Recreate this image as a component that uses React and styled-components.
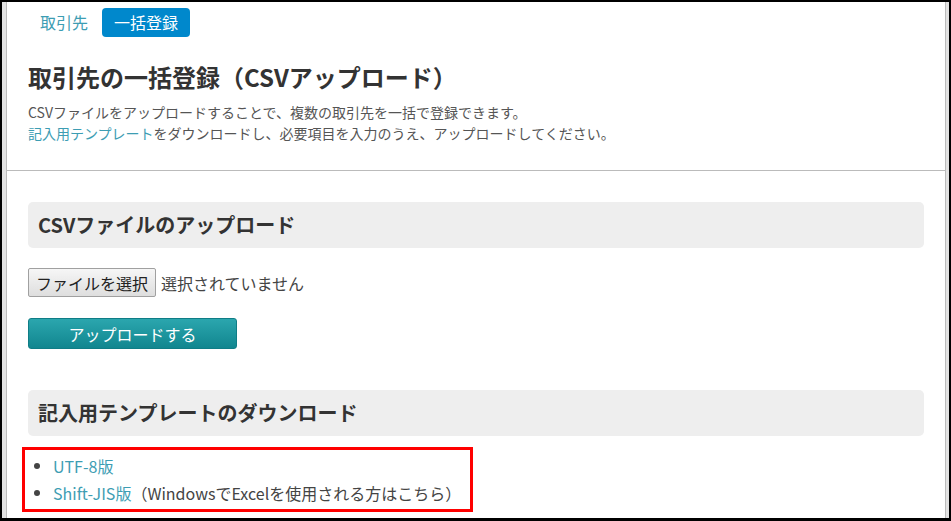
import React from "react";
import styled, { createGlobalStyle } from "styled-components";

const Global = createGlobalStyle`
  html, body { margin: 0; padding: 0; background: #fff; }
  * { box-sizing: border-box; }
  body { font-family: "Noto Sans CJK JP", "Noto Sans", sans-serif; color: #333; }
`;

const Frame = styled.div`
  width: 951px;
  height: 521px;
  border: 2px solid #000;
  border-bottom-width: 3px;
  background: #e2e2e2;
  padding: 0 3px 0 4px;
  display: flex;
  overflow: hidden;
`;

const Panel = styled.div`
  flex: 1;
  background: #fff;
  border-left: 1px solid #bbb;
  border-right: 1px solid #bbb;
  display: flex;
  flex-direction: column;
`;

const Header = styled.div`
  padding: 6px 21px 26px;
  border-bottom: 1px solid #bbb;
`;

const Tabs = styled.div`
  display: flex;
  gap: 2px;
`;

const Tab = styled.div`
  height: 29px;
  line-height: 29px;
  padding: 0 12px;
  font-size: 16px;
  border-radius: 4px;
  color: ${(p) => (p.$active ? "#fff" : "#3d9db3")};
  background: ${(p) => (p.$active ? "#0088cc" : "transparent")};
`;

const Title = styled.h1`
  margin: 23px 0 0;
  font-size: 24px;
  line-height: 34px;
  font-weight: 700;
  color: #333;
`;

const Desc = styled.p`
  margin: 8px 0 0;
  font-size: 14px;
  line-height: 21px;
  color: #555;
`;

const Link = styled.a`
  color: #3d9db3;
  text-decoration: none;
`;

const Body = styled.div`
  padding: 31px 21px 0;
  display: flex;
  flex-direction: column;
  align-items: flex-start;
`;

const SectionHead = styled.h2`
  align-self: stretch;
  margin: ${(p) => p.$mt || 0}px 0 0;
  height: 46px;
  line-height: 46px;
  padding: 0 10px;
  background: #eee;
  border-radius: 5px;
  font-size: 20px;
  font-weight: 700;
  color: #333;
`;

const FileRow = styled.div`
  margin-top: 20px;
  display: flex;
  align-items: center;
  gap: 5px;
  font-size: 16px;
  color: #444;
`;

const FileButton = styled.button`
  height: 29px;
  padding: 0 7px;
  font-family: inherit;
  font-size: 16px;
  color: #222;
  background: linear-gradient(#f6f6f6, #dedede);
  border: 1px solid #a0a0a0;
  border-radius: 2px;
`;

const UploadButton = styled.button`
  margin-top: 21px;
  width: 209px;
  height: 31px;
  font-family: inherit;
  font-size: 16px;
  color: #fff;
  background: linear-gradient(#2ba6ae, #11868f);
  border: 1px solid #0f7d86;
  border-radius: 3px;
`;

const Highlight = styled.div`
  margin: 11px 0 0 -6px;
  width: 451px;
  border: 3px solid #ff0000;
  padding: 2px 0 3px;
`;

const List = styled.ul`
  margin: 0;
  padding: 0;
  list-style: none;
`;

const Item = styled.li`
  display: flex;
  align-items: center;
  height: 27px;
  font-size: 16px;
  color: #444;
  &::before {
    content: "";
    width: 6px;
    height: 6px;
    border-radius: 50%;
    background: #444;
    margin: 0 13px 0 9px;
    flex: none;
  }
`;

export default function App() {
  return (
    <>
      <Global />
      <Frame>
        <Panel>
          <Header>
            <Tabs>
              <Tab>取引先</Tab>
              <Tab $active>一括登録</Tab>
            </Tabs>
            <Title>取引先の一括登録（CSVアップロード）</Title>
            <Desc>
              CSVファイルをアップロードすることで、複数の取引先を一括で登録できます。
              <br />
              <Link href="#">記入用テンプレート</Link>
              をダウンロードし、必要項目を入力のうえ、アップロードしてください。
            </Desc>
          </Header>
          <Body>
            <SectionHead>CSVファイルのアップロード</SectionHead>
            <FileRow>
              <FileButton>ファイルを選択</FileButton>
              <span>選択されていません</span>
            </FileRow>
            <UploadButton>アップロードする</UploadButton>
            <SectionHead $mt={41}>記入用テンプレートのダウンロード</SectionHead>
            <Highlight>
              <List>
                <Item>
                  <Link href="#">UTF-8版</Link>
                </Item>
                <Item>
                  <Link href="#">Shift-JIS版</Link>
                  （WindowsでExcelを使用される方はこちら）
                </Item>
              </List>
            </Highlight>
          </Body>
        </Panel>
      </Frame>
    </>
  );
}
